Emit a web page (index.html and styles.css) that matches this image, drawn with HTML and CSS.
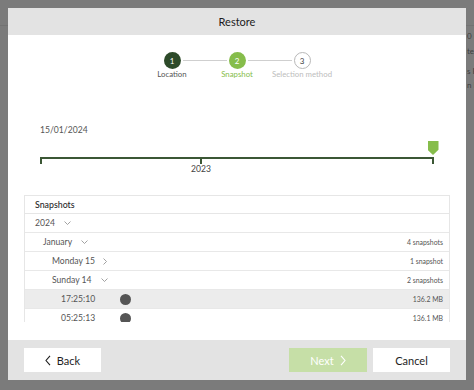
FILE: index.html
```html
<!DOCTYPE html>
<html>
<head>
<meta charset="utf-8">
<link rel="stylesheet" href="styles.css">
</head>
<body>
<div class="page">
  <div class="page-bar"></div>
  <div class="page-side">
    <div class="side-line s1">0 H</div>
    <div class="side-line s2">te</div>
    <div class="side-line s3">s H</div>
    <div class="side-line s4">n E</div>
  </div>
</div>

<div class="modal">
  <div class="modal-header">Restore</div>
  <div class="modal-body">
    <div class="steps">
      <div class="step done"><span class="step-dot">1</span><span class="step-label">Location</span></div>
      <div class="step active"><span class="step-dot">2</span><span class="step-label">Snapshot</span></div>
      <div class="step todo"><span class="step-dot">3</span><span class="step-label">Selection method</span></div>
    </div>

    <div class="timeline">
      <div class="tl-date">15/01/2024</div>
      <div class="tl-track">
        <span class="tick" style="left:0"></span>
        <span class="tick" style="left:160px"></span>
        <span class="tick tick-end"></span>
        <span class="tl-year" style="left:160px">2023</span>
        <span class="tl-marker"></span>
      </div>
    </div>

    <div class="snapshots">
      <div class="snap-head">Snapshots</div>
      <div class="snap-body">
        <div class="row lvl0"><span class="name">2024</span><svg class="chev" viewBox="0 0 7 4"><path d="M0.5 0.5 L3.5 3.5 L6.5 0.5"/></svg></div>
        <div class="row lvl1"><span class="name">January</span><svg class="chev" viewBox="0 0 7 4"><path d="M0.5 0.5 L3.5 3.5 L6.5 0.5"/></svg><span class="meta">4 snapshots</span></div>
        <div class="row lvl2"><span class="name">Monday 15</span><svg class="chev-r" viewBox="0 0 4 7"><path d="M0.5 0.5 L3.5 3.5 L0.5 6.5"/></svg><span class="meta">1 snapshot</span></div>
        <div class="row lvl2"><span class="name">Sunday 14</span><svg class="chev" viewBox="0 0 7 4"><path d="M0.5 0.5 L3.5 3.5 L6.5 0.5"/></svg><span class="meta">2 snapshots</span></div>
        <div class="row lvl3 selected"><span class="name time">17:25:10</span><span class="snap-dot"></span><span class="meta">136.2 MB</span></div>
        <div class="row lvl3"><span class="name time">05:25:13</span><span class="snap-dot"></span><span class="meta">136.1 MB</span></div>
        <div class="row lvl2"><span class="name">Saturday 13</span><svg class="chev-r" viewBox="0 0 4 7"><path d="M0.5 0.5 L3.5 3.5 L0.5 6.5"/></svg><span class="meta">1 snapshot</span></div>
        <div class="row lvl0"><span class="name">2023</span><svg class="chev-r" viewBox="0 0 4 7"><path d="M0.5 0.5 L3.5 3.5 L0.5 6.5"/></svg></div>
      </div>
    </div>
  </div>
  <div class="modal-footer">
    <button class="btn btn-back"><svg class="btn-chev" viewBox="0 0 6 11"><path d="M5 0.8 L1 5.5 L5 10.2"/></svg>Back</button>
    <span class="spacer"></span>
    <button class="btn btn-next">Next<svg class="btn-chev" viewBox="0 0 6 11"><path d="M1 0.8 L5 5.5 L1 10.2"/></svg></button>
    <button class="btn btn-cancel">Cancel</button>
  </div>
</div>
</body>
</html>
```

FILE: styles.css
```css
* { box-sizing: border-box; }

html, body {
  margin: 0;
  padding: 0;
}

body {
  width: 474px;
  height: 390px;
  overflow: hidden;
  background: #7b7b7b;
  font-family: Lato, "Open Sans", "DejaVu Sans", sans-serif;
  position: relative;
}

/* background page (dimmed) */
.page {
  width: 474px;
  height: 390px;
}
.page-bar {
  height: 26px;
  border-bottom: 1px solid #727272;
}
.page-side {
  padding-left: 467px;
  padding-top: 5px;
  color: #3f3f3f;
  font-size: 8px;
  white-space: nowrap;
}
.side-line { height: 10px; line-height: 10px; }
.s2 { margin-top: 5px; }
.s3 { margin-top: 10px; }
.s4 { margin-top: 4px; }

/* modal */
.modal {
  position: absolute;
  left: 8px;
  top: 8px;
  width: 458px;
  height: 372px;
  background: #fff;
  display: flex;
  flex-direction: column;
}

.modal-header {
  height: 27px;
  line-height: 27px;
  background: #e3e3e3;
  text-align: center;
  font-size: 11px;
  color: #1c1c1c;
}

.modal-body {
  flex: 1;
  padding: 0 16px;
}

/* stepper */
.steps {
  display: flex;
  justify-content: center;
  margin-top: 17px;
}
.step {
  width: 65px;
  display: flex;
  flex-direction: column;
  align-items: center;
  position: relative;
}
.step + .step::before {
  content: "";
  position: absolute;
  top: 8px;
  right: calc(50% + 10.5px);
  width: 44px;
  height: 1px;
  background: #cfcfcf;
}
.step-dot {
  width: 17px;
  height: 17px;
  border-radius: 50%;
  display: flex;
  align-items: center;
  justify-content: center;
  font-size: 8px;
  color: #fff;
}
.step-label {
  font-size: 7.8px;
  line-height: 10px;
  white-space: nowrap;
}
.done .step-dot { background: #2d4a29; }
.done .step-label { color: #555; }
.active .step-dot { background: #86bd4b; }
.active .step-label { color: #86bd4b; }
.todo .step-dot { background: #fff; border: 1px solid #b8b8b8; color: #444; }
.todo .step-label { color: #bdbdbd; }

/* timeline */
.timeline {
  margin: 46px 16px 0;
}
.tl-date {
  font-size: 8.6px;
  line-height: 11px;
  color: #555;
}
.tl-track {
  position: relative;
  height: 2px;
  background: #3b5735;
  margin-top: 21px;
  margin-bottom: 36px;
}
.tick {
  position: absolute;
  top: 0;
  width: 2px;
  height: 7px;
  background: #3b5735;
}
.tick-end { right: 0; }
.tl-year {
  position: absolute;
  top: 7px;
  width: 40px;
  margin-left: -19px;
  text-align: center;
  font-size: 8.6px;
  line-height: 11px;
  color: #444;
}
.tl-marker {
  position: absolute;
  right: -4.5px;
  top: -16px;
  width: 11px;
  height: 14px;
  background: #86bd4b;
  clip-path: polygon(0 0, 100% 0, 100% 62%, 50% 100%, 0 62%);
}

/* snapshots table */
.snapshots {
  border: 1px solid #e6e6e6;
  border-bottom: none;
}
.snap-head {
  height: 18px;
  line-height: 18px;
  padding-left: 10px;
  font-size: 8.8px;
  font-weight: 500;
  color: #2a2a2a;
  border-bottom: 1px solid #e6e6e6;
}
.snap-body {
  height: 108px;
  overflow-y: scroll;
}
.snap-body::-webkit-scrollbar { width: 5px; }
.snap-body::-webkit-scrollbar-track { background: transparent; }
.snap-body::-webkit-scrollbar-thumb {
  background: #c4c4c4;
  border-left: 1px solid #fff;
  border-right: 2px solid #fff;
}
.row {
  display: flex;
  align-items: center;
  height: 19px;
  border-bottom: 1px solid #e8e8e8;
  font-size: 8.6px;
  color: #555;
}
.row.selected { background: #ececec; }
.lvl0 { padding-left: 10px; }
.lvl1 { padding-left: 18px; }
.lvl2 { padding-left: 27px; }
.lvl3 { padding-left: 0; }
.name { white-space: nowrap; }
.name.time {
  width: 95px;
  padding-left: 36px;
}
.chev {
  width: 7px;
  height: 4px;
  margin-left: 9px;
  fill: none;
  stroke: #8a8a8a;
  stroke-width: 0.8;
}
.chev-r {
  width: 4px;
  height: 7px;
  margin-left: 8px;
  fill: none;
  stroke: #8a8a8a;
  stroke-width: 0.8;
}
.snap-dot {
  width: 11px;
  height: 11px;
  border-radius: 50%;
  background: #555;
}
.meta {
  margin-left: auto;
  padding-right: 6px;
  font-size: 6.9px;
  color: #555;
}

/* footer */
.modal-footer {
  height: 40px;
  background: #e3e3e3;
  padding: 8px 16px 8px;
  display: flex;
  gap: 6px;
}
.spacer { flex: 1; }
.btn {
  width: 77px;
  height: 24px;
  border: none;
  background: #fff;
  font-family: inherit;
  font-size: 11px;
  color: #1e1e1e;
  display: flex;
  align-items: center;
  justify-content: center;
  gap: 6px;
  padding: 0;
}
.btn-next {
  width: 78px;
  background: #c6dfa7;
  color: #fff;
}
.btn-chev {
  width: 6px;
  height: 11px;
  fill: none;
  stroke: currentColor;
  stroke-width: 1.1;
}
```
